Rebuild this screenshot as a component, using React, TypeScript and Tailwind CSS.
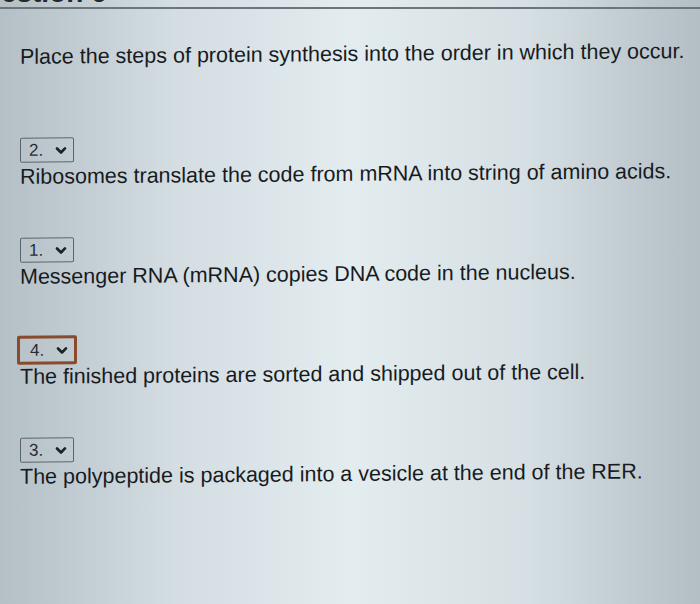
import { ChevronDown } from "lucide-react";

type Step = {
  order: string;
  text: string;
  focused?: boolean;
};

const steps: Step[] = [
  { order: "2.", text: "Ribosomes translate the code from mRNA into string of amino acids." },
  { order: "1.", text: "Messenger RNA (mRNA) copies DNA code in the nucleus." },
  { order: "4.", text: "The finished proteins are sorted and shipped out of the cell.", focused: true },
  { order: "3.", text: "The polypeptide is packaged into a vesicle at the end of the RER." },
];

const OrderSelect = ({ value, focused }: { value: string; focused?: boolean }) => {
  return (
    <div
      className={
        focused
          ? "-ml-[3px] -my-[2px] flex h-[29px] w-[60px] items-center gap-[10px] rounded-[2px] border-[3px] border-[#8a4a2c] pl-[10px]"
          : "flex h-[25px] w-[54px] items-center gap-[10px] rounded-[2px] border border-[#5d6468] pl-[8px]"
      }
    >
      <span className="text-[17px] leading-none text-[#2a2d30]">{value}</span>
      <ChevronDown className="h-[16px] w-[16px] text-[#1e2124]" strokeWidth={4} />
    </div>
  );
};

export default function App() {
  return (
    <div
      className="h-[604px] w-[700px] overflow-hidden bg-[linear-gradient(90deg,#b4bfc6_0%,#d3dde2_25%,#e3ecef_50%,#d6e0e4_75%,#b3bec5_100%)] text-[#181b1e]"
      style={{ fontFamily: '"Liberation Sans", Arial, sans-serif' }}
    >
      {/* cut-off question heading */}
      <div className="h-[9px] overflow-hidden border-b-2 border-[#6c757b]">
        <div className="-mt-[21px] -ml-[38px] text-[28px] font-bold leading-[28px] text-[#25282b]">
          Question 6
        </div>
      </div>

      <div className="origin-left -skew-y-[0.5deg] pl-[20px] pt-[36px]">
        <p className="text-[21.5px] leading-[25px]">
          Place the steps of protein synthesis into the order in which they occur.
        </p>

        <div className="mt-[68px] flex flex-col gap-[48px]">
          {steps.map((step) => (
            <div key={step.order} className="flex flex-col gap-[2px]">
              <OrderSelect value={step.order} focused={step.focused} />
              <p className="text-[21.5px] leading-[25px]">{step.text}</p>
            </div>
          ))}
        </div>
      </div>
    </div>
  );
}
